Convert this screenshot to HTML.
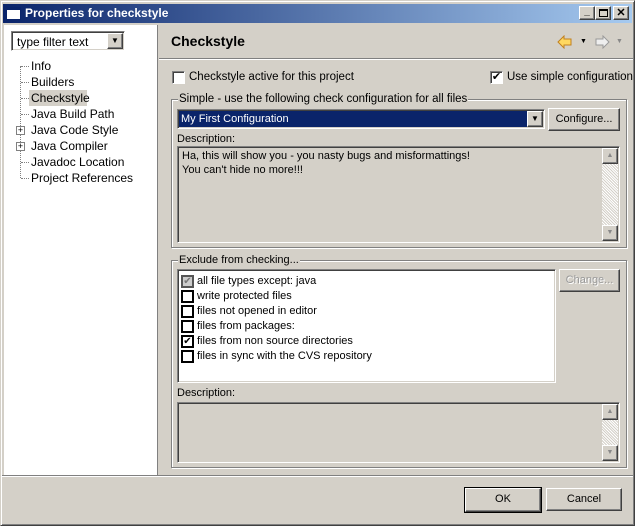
<!DOCTYPE html><html><head><style>
*{box-sizing:border-box}body{margin:0;width:635px;height:526px;background:#d4d0c8;font-family:"Liberation Sans",sans-serif;font-size:11px;color:#000;position:relative;overflow:hidden}
.a{position:absolute;white-space:nowrap}
.sunk{border:1px solid;border-color:#808080 #fff #fff #808080;box-shadow:inset 1px 1px 0 #404040,inset -1px -1px 0 #d4d0c8}
.btn{border:1px solid;border-color:#fff #404040 #404040 #fff;box-shadow:inset -1px -1px 0 #808080;text-align:center;background:#d4d0c8}
.cb{position:absolute;width:13px;height:13px;background:#fff;border:1px solid;border-color:#808080 #fff #fff #808080;box-shadow:inset 1px 1px 0 #404040}
.bk{position:absolute;width:13px;height:13px;background:#fff;border:2px solid #000}
.grp{position:absolute;border:1px solid #808080;box-shadow:1px 1px 0 #fff,inset 1px 1px 0 #fff}
.lg{position:absolute;background:#d4d0c8;padding:0 1px}
.sb{position:absolute;width:16px;background:#e8e6e0 repeating-linear-gradient(45deg,#d4d0c8 0 1px,#fff 1px 2px)}
.sbb{position:absolute;left:0;width:16px;height:16px}
</style></head><body>
<div class="a" style="left:0;top:0;width:635px;height:526px;border:1px solid;border-color:#d4d0c8 #404040 #404040 #d4d0c8;box-shadow:inset 1px 1px 0 #fff,inset -1px -1px 0 #808080"></div>
<div class="a" style="left:3px;top:4px;width:629px;height:19px;background:linear-gradient(90deg,#0a246a,#a6caf0)"></div>
<div class="a" style="left:6px;top:7px;width:15px;height:13px;background:#fff;border:1px solid #0a246a;border-top:3px solid #0a246a"></div>
<div class="a" style="left:25px;top:6px;color:#fff;font-weight:bold;font-size:12px">Properties for checkstyle</div>
<div class="a btn" style="left:579px;top:6px;width:16px;height:14px;font-size:10px;line-height:10px;font-weight:bold">_</div>
<div class="a btn" style="left:595px;top:6px;width:16px;height:14px"><div class="a" style="left:3px;top:2px;width:9px;height:8px;border:1px solid #000;border-top-width:2px"></div></div>
<div class="a btn" style="left:613px;top:6px;width:16px;height:14px;font-weight:bold;font-size:11px;line-height:12px">✕</div>

<div class="a" style="left:4px;top:25px;width:154px;height:451px;background:#fff;border-right:1px solid #808080"></div>
<div class="a sunk" style="left:11px;top:31px;width:114px;height:20px;background:#fff"></div>
<div class="a" style="left:17px;top:35px;font-size:12px">type filter text</div>
<div class="a btn" style="left:107px;top:33px;width:16px;height:16px;font-size:8px;line-height:14px">▼</div>
<div class="a" style="left:20px;top:66px;width:1px;height:112px;border-left:1px dotted #808080"></div>
<div class="a" style="left:29px;top:90px;width:58px;height:16px;background:#d4d0c8"></div>
<div style="font-size:12px">
<div class="a" style="left:31px;top:59px">Info</div>
<div class="a" style="left:31px;top:75px">Builders</div>
<div class="a" style="left:31px;top:91px">Checkstyle</div>
<div class="a" style="left:31px;top:107px">Java Build Path</div>
<div class="a" style="left:31px;top:123px">Java Code Style</div>
<div class="a" style="left:31px;top:139px">Java Compiler</div>
<div class="a" style="left:31px;top:155px">Javadoc Location</div>
<div class="a" style="left:31px;top:171px">Project References</div>
</div>
<div class="a" style="left:21px;top:66px;width:8px;border-top:1px dotted #808080"></div>
<div class="a" style="left:21px;top:82px;width:8px;border-top:1px dotted #808080"></div>
<div class="a" style="left:21px;top:98px;width:8px;border-top:1px dotted #808080"></div>
<div class="a" style="left:21px;top:114px;width:8px;border-top:1px dotted #808080"></div>
<div class="a" style="left:21px;top:162px;width:8px;border-top:1px dotted #808080"></div>
<div class="a" style="left:21px;top:178px;width:8px;border-top:1px dotted #808080"></div>
<div class="a" style="left:16px;top:126px;width:9px;height:9px;border:1px solid #808080;background:#fff;font-size:9px;line-height:7px;text-align:center">+</div>
<div class="a" style="left:16px;top:142px;width:9px;height:9px;border:1px solid #808080;background:#fff;font-size:9px;line-height:7px;text-align:center">+</div>

<div class="a" style="left:171px;top:33px;font-weight:bold;font-size:14px">Checkstyle</div>
<svg class="a" style="left:557px;top:35px" width="16" height="14"><path d="M1 7 L7 1 V4 H14 V10 H7 V13 Z" fill="#ffd860" stroke="#c08020"/></svg>
<div class="a" style="left:580px;top:38px;font-size:7px">▼</div>
<svg class="a" style="left:594px;top:35px" width="16" height="14"><path d="M15 7 L9 1 V4 H2 V10 H9 V13 Z" fill="#eee" stroke="#999"/></svg>
<div class="a" style="left:616px;top:38px;font-size:7px;color:#888">▼</div>
<div class="a" style="left:159px;top:58px;width:474px;border-top:1px solid #808080;border-bottom:1px solid #fff"></div>

<div class="cb" style="left:172px;top:71px"></div>
<div class="a" style="left:189px;top:71px;font-size:11.5px">Checkstyle active for this project</div>
<div class="cb" style="left:490px;top:71px;font-size:11px;line-height:10px;text-align:center">✔</div>
<div class="a" style="left:507px;top:71px;font-size:11.5px">Use simple configuration</div>

<div class="grp" style="left:171px;top:99px;width:456px;height:149px"></div>
<div class="lg" style="left:178px;top:93px;font-size:11.5px">Simple - use the following check configuration for all files</div>
<div class="a sunk" style="left:177px;top:109px;width:368px;height:20px;background:#fff"></div>
<div class="a" style="left:179px;top:111px;width:348px;height:16px;background:#0a246a;color:#fff;padding:2px 2px">My First Configuration</div>
<div class="a btn" style="left:527px;top:111px;width:16px;height:16px;font-size:8px;line-height:14px">▼</div>
<div class="a btn" style="left:548px;top:108px;width:72px;height:23px;line-height:20px">Configure...</div>
<div class="a" style="left:177px;top:133px">Description:</div>
<div class="a sunk" style="left:177px;top:146px;width:443px;height:97px"></div>
<div class="a" style="left:182px;top:149px;line-height:14px">Ha, this will show you - you nasty bugs and misformattings!<br>You can't hide no more!!!</div>
<div class="sb" style="left:602px;top:148px;height:93px"><div class="sbb btn" style="top:0;font-size:7px;line-height:13px;color:#888">▲</div><div class="sbb btn" style="bottom:0;font-size:7px;line-height:13px;color:#888">▼</div></div>

<div class="grp" style="left:171px;top:260px;width:456px;height:208px"></div>
<div class="lg" style="left:178px;top:254px">Exclude from checking...</div>
<div class="a sunk" style="left:177px;top:269px;width:379px;height:114px;background:#fff"></div>
<div>
<div class="bk" style="left:181px;top:275px;border-color:#555;background:#ccc;color:#777;font-size:10px;line-height:9px;text-align:center">✔</div><div class="a" style="left:197px;top:275px">all file types except: java</div>
<div class="bk" style="left:181px;top:290px"></div><div class="a" style="left:197px;top:290px">write protected files</div>
<div class="bk" style="left:181px;top:305px"></div><div class="a" style="left:197px;top:305px">files not opened in editor</div>
<div class="bk" style="left:181px;top:320px"></div><div class="a" style="left:197px;top:320px">files from packages:</div>
<div class="bk" style="left:181px;top:335px;font-size:10px;line-height:9px;text-align:center">✔</div><div class="a" style="left:197px;top:335px">files from non source directories</div>
<div class="bk" style="left:181px;top:350px"></div><div class="a" style="left:197px;top:350px">files in sync with the CVS repository</div>
</div>
<div class="a btn" style="left:559px;top:269px;width:61px;height:23px;line-height:20px;color:#999;text-shadow:1px 1px 0 #fff">Change...</div>
<div class="a" style="left:177px;top:387px">Description:</div>
<div class="a sunk" style="left:177px;top:402px;width:443px;height:61px"></div>
<div class="sb" style="left:602px;top:404px;height:57px"><div class="sbb btn" style="top:0;font-size:7px;line-height:13px;color:#888">▲</div><div class="sbb btn" style="bottom:0;font-size:7px;line-height:13px;color:#888">▼</div></div>

<div class="a" style="left:2px;top:475px;width:631px;border-top:1px solid #808080;border-bottom:1px solid #fff"></div>
<div class="a btn" style="left:465px;top:488px;width:76px;height:24px;line-height:20px;outline:1px solid #000">OK</div>
<div class="a btn" style="left:546px;top:488px;width:76px;height:23px;line-height:20px">Cancel</div>
</body></html>
